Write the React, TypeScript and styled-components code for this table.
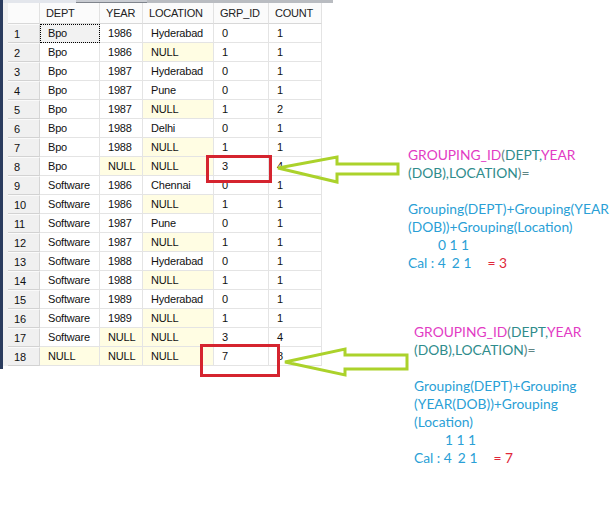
import React from "react";
import styled, { createGlobalStyle } from "styled-components";

const GlobalStyle = createGlobalStyle`
  html, body { margin: 0; padding: 0; background: #ffffff; }
  body { width: 611px; height: 509px; overflow: hidden; }
`;

const Canvas = styled.div`
  position: relative;
  width: 611px;
  height: 509px;
  display: flex;
  align-items: flex-start;
  background: #ffffff;
`;

const ResultsPane = styled.div`
  display: flex;
  flex-direction: column;
  width: 330px;
  border-left: 3px solid #2b3c5e;
`;

const TopStrip = styled.div`
  height: 3px;
  display: flex;
  background: #ffffff;
`;

const TopGap = styled.div`
  width: 73px;
  background: #e3e6ec;
`;

const TopTab = styled.div`
  width: 71px;
  background: #c9ccd2;
  border-bottom: 1px solid #7f848c;
  box-sizing: border-box;
`;

const TopLine = styled.div`
  flex: 1;
  background: #b9bcc1;
`;

const GridFrame = styled.div`
  display: flex;
  background: #ffffff;
  padding-bottom: 3px;
`;

const Gutter = styled.div`
  width: 5px;
  background: #f0f0f0;
`;

const Grid = styled.div`
  display: grid;
  grid-template-columns: 32px 60px 43px 71px 55px 53px;
  grid-auto-rows: 19px;
  grid-template-rows: 21px;
  font-family: "Liberation Sans", Arial, sans-serif;
  font-size: 11px;
  letter-spacing: -0.2px;
  color: #111111;
`;

const HeaderCell = styled.div`
  display: flex;
  align-items: center;
  padding-left: 6px;
  background: #fbfbfb;
  border-right: 1px solid #e2e2e2;
  border-bottom: 1px solid #d8d8d8;
  box-sizing: border-box;
  color: #222222;
`;

const RowHead = styled.div`
  display: flex;
  align-items: center;
  padding-left: 6px;
  background: #f0f0f0;
  border-right: 1px solid #d5d5d5;
  border-bottom: 1px solid #d2d2d2;
  border-top: 1px solid #fafafa;
  box-sizing: border-box;
`;

const Cell = styled.div<{ $null?: boolean; $focus?: boolean }>`
  display: flex;
  align-items: center;
  padding-left: 8px;
  box-sizing: border-box;
  background: ${(p) => (p.$focus ? "#f2f2f2" : p.$null ? "#fffde3" : "#ffffff")};
  border-right: 1px solid #e4e4e4;
  border-bottom: 1px solid #e4e4e4;
  outline: ${(p) => (p.$focus ? "1px dotted #000000" : "none")};
  outline-offset: -1px;
`;

const NotesColumn = styled.div`
  display: flex;
  flex-direction: column;
  padding-top: 146px;
  gap: 51px;
  font-family: Lato, "Liberation Sans", sans-serif;
  font-size: 13.8px;
  line-height: 18px;
  white-space: nowrap;
`;

const Note = styled.div<{ $left: number }>`
  display: flex;
  flex-direction: column;
  margin-left: ${(p) => p.$left}px;
`;

const NoteLine = styled.div<{ $indent?: number }>`
  height: 18px;
  padding-left: ${(p) => p.$indent || 0}px;
  color: #2a9fd6;
`;

const Fn = styled.span`
  color: #e23bc4;
`;
const Paren = styled.span`
  color: #5f8585;
`;
const Arg = styled.span`
  color: #2f8c8c;
`;
const Result = styled.span`
  color: #e0283a;
  margin-left: 16px;
`;
const Gap = styled.span<{ $w: number }>`
  display: inline-block;
  width: ${(p) => p.$w}px;
`;

const Overlay = styled.svg`
  position: absolute;
  left: 0;
  top: 0;
  width: 611px;
  height: 509px;
  pointer-events: none;
`;

const columns = ["DEPT", "YEAR", "LOCATION", "GRP_ID", "COUNT"];

const rows: string[][] = [
  ["Bpo", "1986", "Hyderabad", "0", "1"],
  ["Bpo", "1986", "NULL", "1", "1"],
  ["Bpo", "1987", "Hyderabad", "0", "1"],
  ["Bpo", "1987", "Pune", "0", "1"],
  ["Bpo", "1987", "NULL", "1", "2"],
  ["Bpo", "1988", "Delhi", "0", "1"],
  ["Bpo", "1988", "NULL", "1", "1"],
  ["Bpo", "NULL", "NULL", "3", "4"],
  ["Software", "1986", "Chennai", "0", "1"],
  ["Software", "1986", "NULL", "1", "1"],
  ["Software", "1987", "Pune", "0", "1"],
  ["Software", "1987", "NULL", "1", "1"],
  ["Software", "1988", "Hyderabad", "0", "1"],
  ["Software", "1988", "NULL", "1", "1"],
  ["Software", "1989", "Hyderabad", "0", "1"],
  ["Software", "1989", "NULL", "1", "1"],
  ["Software", "NULL", "NULL", "3", "4"],
  ["NULL", "NULL", "NULL", "7", "8"],
];

const FormulaHead = () => (
  <>
    <NoteLine>
      <Fn>GROUPING_ID</Fn>
      <Paren>(</Paren>
      <Arg>DEPT,</Arg>
      <Fn>YEAR</Fn>
    </NoteLine>
    <NoteLine>
      <Arg>(DOB),LOCATION</Arg>
      <Paren>)=</Paren>
    </NoteLine>
    <NoteLine>&nbsp;</NoteLine>
  </>
);

const Arrow = ({ tip, headX, headTop, headBottom, shaftTop, shaftBottom, endX }: {
  tip: [number, number]; headX: number; headTop: number; headBottom: number;
  shaftTop: number; shaftBottom: number; endX: number;
}) => (
  <polygon
    points={`${tip[0]},${tip[1]} ${headX},${headTop} ${headX},${shaftTop} ${endX},${shaftTop} ${endX},${shaftBottom} ${headX},${shaftBottom} ${headX},${headBottom}`}
    fill="none"
    stroke="#abd22b"
    strokeWidth={3}
    strokeLinejoin="miter"
  />
);

export default function App() {
  return (
    <>
      <GlobalStyle />
      <Canvas>
        <ResultsPane>
          <TopStrip>
            <TopGap />
            <TopTab />
            <TopLine />
          </TopStrip>
          <GridFrame>
            <Gutter />
            <Grid>
              <HeaderCell />
              {columns.map((c) => (
                <HeaderCell key={c}>{c}</HeaderCell>
              ))}
              {rows.map((r, i) => (
                <React.Fragment key={i}>
                  <RowHead>{i + 1}</RowHead>
                  {r.map((v, j) => (
                    <Cell key={j} $null={v === "NULL"} $focus={i === 0 && j === 0}>
                      {v}
                    </Cell>
                  ))}
                </React.Fragment>
              ))}
            </Grid>
          </GridFrame>
        </ResultsPane>
        <NotesColumn>
          <Note $left={75}>
            <FormulaHead />
            <NoteLine>Grouping(DEPT)+Grouping(YEAR</NoteLine>
            <NoteLine>(DOB))+Grouping(Location)</NoteLine>
            <NoteLine $indent={30}>0 1 1</NoteLine>
            <NoteLine>
              Cal : 4<Gap $w={6} />2 1<Result>= 3</Result>
            </NoteLine>
          </Note>
          <Note $left={81}>
            <FormulaHead />
            <NoteLine>Grouping(DEPT)+Grouping</NoteLine>
            <NoteLine>(YEAR(DOB))+Grouping</NoteLine>
            <NoteLine>(Location)</NoteLine>
            <NoteLine $indent={31}>1 1 1</NoteLine>
            <NoteLine>
              Cal : 4<Gap $w={6} />2 1<Result>= 7</Result>
            </NoteLine>
          </Note>
        </NotesColumn>
        <Overlay viewBox="0 0 611 509">
          <rect x={207.5} y={156.5} width={63} height={25} fill="none" stroke="#d5242f" strokeWidth={3} />
          <rect x={201.5} y={345.5} width={77} height={30} fill="none" stroke="#d5242f" strokeWidth={3} />
          <Arrow tip={[278, 168]} headX={337} headTop={157} headBottom={182} shaftTop={164} shaftBottom={174} endX={398} />
          <Arrow tip={[285, 362]} headX={345} headTop={349} headBottom={375} shaftTop={355} shaftBottom={369} endX={407} />
        </Overlay>
      </Canvas>
    </>
  );
}
